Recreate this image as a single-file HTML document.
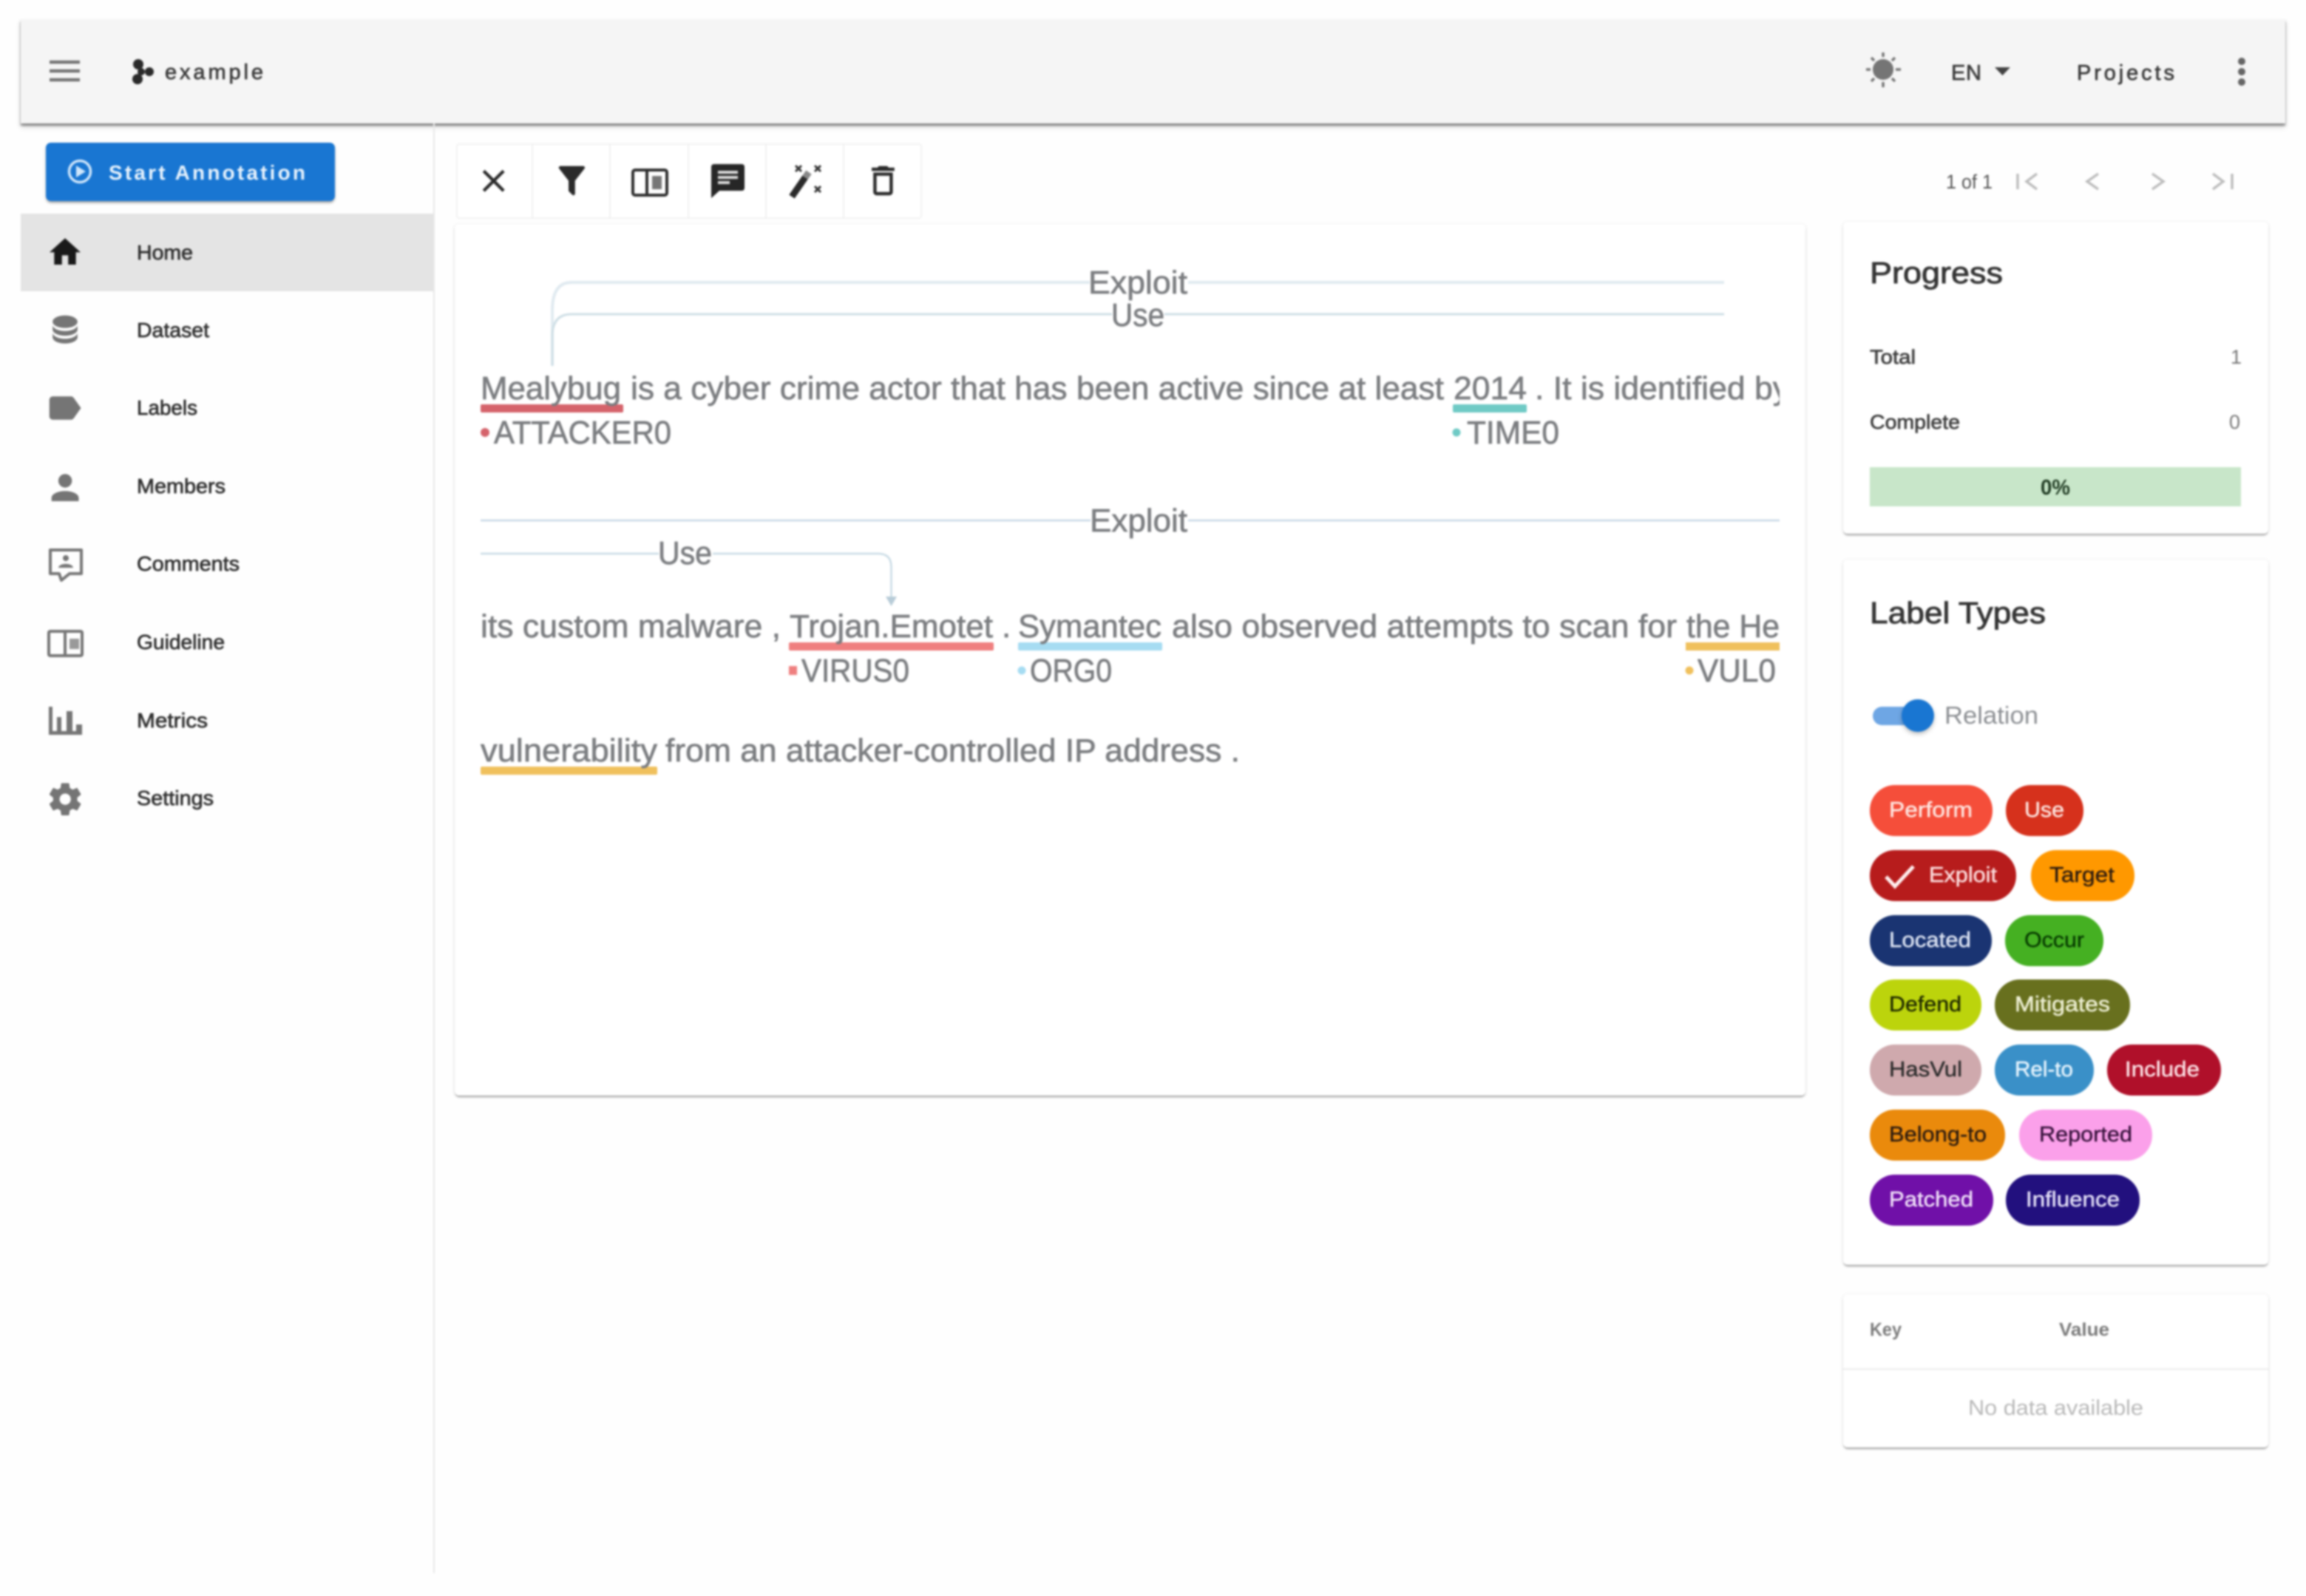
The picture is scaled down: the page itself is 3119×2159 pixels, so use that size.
<!DOCTYPE html>
<html lang="en"><head><meta charset="utf-8"><title>example</title>
<style>
html,body{margin:0;padding:0;background:#fff;width:3119px;height:2159px;overflow:hidden}
#w{position:relative;width:3119px;height:2159px;filter:blur(1.2px);background:#fefefe}
.a{position:absolute;box-sizing:border-box}
.card{background:#fff;border-radius:6px;box-shadow:0 3px 2px -1px rgba(0,0,0,.32),0 1px 5px rgba(0,0,0,.13)}
svg{position:absolute;left:0;top:0}
text{font-family:"Liberation Sans",Arial,sans-serif;white-space:pre}
.nav{font-size:28px;fill:#2e2e2e;stroke:#2e2e2e;stroke-width:.7px}
.top{font-size:29px;fill:#3a3a3a;stroke:#3a3a3a;stroke-width:.7px}
.tx{font-size:44px;fill:#7b7d80;stroke:#7b7d80;stroke-width:.7px}
.h{font-size:41px;fill:#333;stroke:#333;stroke-width:.9px}
.s{font-size:27px;fill:#3c3c3c;stroke:#3c3c3c;stroke-width:.7px}
.c{font-size:29px;fill:#fff;stroke:#fff;stroke-width:.4px}
.d{fill:#2a1a10;stroke:#2a1a10}
.k{font-size:25px;fill:#7a7a7a;font-weight:bold}
</style></head><body><div id="w">
<div class="a" style="left:28px;top:26px;width:3063px;height:141px;background:#f5f5f5;box-shadow:0 3px 3px rgba(0,0,0,.45),0 5px 8px rgba(0,0,0,.12)"></div>
<div class="a" style="left:586px;top:167px;width:2px;height:1961px;background:#e8e8e8"></div>
<div class="a" style="left:28px;top:289px;width:558px;height:105px;background:#e4e4e4"></div>
<div class="a" style="left:62px;top:193px;width:391px;height:79px;background:#1976d2;border-radius:7px;box-shadow:0 3px 3px -1px rgba(0,0,0,.3),0 2px 5px rgba(0,0,0,.14)"></div>
<div class="a" style="left:617px;top:194px;width:630px;height:102px;background:#fff;border:2px solid #f2f2f2;border-radius:4px"></div>
<div class="a card" style="left:615px;top:303px;width:1827px;height:1179px"></div>
<div class="a card" style="left:2493px;top:300px;width:575px;height:422px"></div>
<div class="a card" style="left:2493px;top:757px;width:575px;height:954px"></div>
<div class="a card" style="left:2493px;top:1751px;width:575px;height:207px"></div>
<div class="a" style="left:2529px;top:632px;width:502px;height:53px;background:#c8e6c9"></div>
<div class="a" style="left:2493px;top:1851px;width:575px;height:2px;background:#ececec"></div>

<svg width="3119" height="2159" viewBox="0 0 3119 2159" xmlns="http://www.w3.org/2000/svg">
<defs><clipPath id="cl"><rect x="640" y="480" width="1767" height="600"/></clipPath></defs>

<!-- app bar -->
<path d="M67 84H108M67 96H108M67 108H108" stroke="#757575" stroke-width="4.500" fill="none"/>
<g fill="#2a2a2a"><circle cx="187" cy="87" r="7"/><circle cx="191" cy="97" r="5"/><circle cx="186" cy="107" r="7"/><circle cx="202" cy="97" r="6"/></g>
<text class="top" x="223" y="107" textLength="133">example</text>
<g fill="#757575" stroke="#757575"><circle cx="2547" cy="94" r="14" stroke="none"/>
<path d="M2547 71V77M2547 111V118M2524 94H2530M2564 94H2571M2531 78L2535 82M2559 106L2563 110M2531 110L2535 106M2559 82L2563 78" stroke-width="3.500" fill="none"/></g>
<text class="top" x="2639" y="108" textLength="41">EN</text>
<path d="M2698 91H2719L2708.500 102Z" fill="#424242"/>
<text class="top" x="2809" y="108" textLength="132">Projects</text>
<g fill="#666"><circle cx="3032" cy="83" r="5"/><circle cx="3032" cy="97" r="5"/><circle cx="3032" cy="111" r="5"/></g>

<!-- start button -->
<circle cx="108" cy="232" r="14.500" fill="none" stroke="#cfe6fb" stroke-width="3.500"/>
<path d="M103 224L116 232L103 240Z" fill="#cfe6fb"/>
<text x="147" y="243" font-size="28" font-weight="bold" fill="#e8f3fd" textLength="266">Start Annotation</text>

<!-- nav icons -->
<path transform="translate(62.800 316) scale(2.100)" d="M10,20V14H14V20H19V12H22L12,3L2,12H5V20H10Z" fill="#1a1a1a"/>
<path transform="translate(62.800 420.500) scale(2.100)" d="M12,3C7.58,3 4,4.79 4,7C4,9.21 7.58,11 12,11C16.42,11 20,9.21 20,7C20,4.79 16.42,3 12,3M4,9V12C4,14.21 7.58,16 12,16C16.42,16 20,14.21 20,12V9C20,11.21 16.42,13 12,13C7.58,13 4,11.21 4,9M4,14V17C4,19.21 7.58,21 12,21C16.42,21 20,19.21 20,17V14C20,16.21 16.42,18 12,18C7.58,18 4,16.21 4,14Z" fill="#757575"/>
<path transform="translate(60 525) scale(2.250)" d="M17.63,5.84C17.27,5.33 16.67,5 16,5H5A2,2 0 0,0 3,7V17A2,2 0 0,0 5,19H16C16.67,19 17.27,18.66 17.63,18.15L22,12L17.63,5.84Z" fill="#757575"/>
<path transform="translate(60.500 632) scale(2.300)" d="M12,4A4,4 0 0,1 16,8A4,4 0 0,1 12,12A4,4 0 0,1 8,8A4,4 0 0,1 12,4M12,14C16.42,14 20,15.79 20,18V20H4V18C4,15.79 7.58,14 12,14Z" fill="#757575"/>
<path d="M68 744H110V776H94L83 785L80 776H68Z" fill="none" stroke="#757575" stroke-width="4" stroke-linejoin="round"/>
<circle cx="89" cy="755" r="4" fill="#757575"/><path d="M79 768C80 761 98 761 99 768Z" fill="#757575"/>
<rect x="66" y="854" width="45" height="33" rx="2" fill="none" stroke="#757575" stroke-width="4"/>
<path d="M88 854V887" stroke="#757575" stroke-width="4"/><rect x="94" y="864" width="13" height="14" fill="#999"/>
<path d="M66 956H71V989H111V994H66ZM77 970H83V989H77ZM90 962H98V989H90ZM103 980H111V989H103Z" fill="#757575"/>
<path transform="translate(62 1055) scale(2.180)" d="M12,15.5A3.5,3.5 0 0,1 8.5,12A3.5,3.5 0 0,1 12,8.5A3.5,3.5 0 0,1 15.5,12A3.5,3.5 0 0,1 12,15.5M19.43,12.97C19.47,12.65 19.5,12.33 19.5,12C19.5,11.67 19.47,11.34 19.43,11L21.54,9.37C21.73,9.22 21.78,8.95 21.66,8.73L19.66,5.27C19.54,5.05 19.27,4.96 19.05,5.05L16.56,6.05C16.04,5.66 15.5,5.32 14.87,5.07L14.5,2.42C14.46,2.18 14.25,2 14,2H10C9.75,2 9.54,2.18 9.5,2.42L9.13,5.07C8.5,5.32 7.96,5.66 7.44,6.05L4.95,5.05C4.73,4.96 4.46,5.05 4.34,5.27L2.34,8.73C2.21,8.95 2.27,9.22 2.46,9.37L4.57,11C4.53,11.34 4.5,11.67 4.5,12C4.5,12.33 4.53,12.65 4.57,12.97L2.46,14.63C2.27,14.78 2.21,15.05 2.34,15.27L4.34,18.73C4.46,18.95 4.73,19.03 4.95,18.95L7.44,17.94C7.96,18.34 8.5,18.68 9.13,18.93L9.5,21.58C9.54,21.82 9.75,22 10,22H14C14.25,22 14.46,21.82 14.5,21.58L14.87,18.93C15.5,18.67 16.04,18.34 16.56,17.94L19.05,18.95C19.27,19.03 19.54,18.95 19.66,18.73L21.66,15.27C21.78,15.05 21.73,14.78 21.54,14.63L19.43,12.97Z" fill="#757575"/>

<!-- nav text -->
<text class="nav" x="185" y="351" textLength="76" lengthAdjust="spacingAndGlyphs">Home</text>
<text class="nav" x="185" y="456" textLength="98" lengthAdjust="spacingAndGlyphs">Dataset</text>
<text class="nav" x="185" y="561" textLength="82" lengthAdjust="spacingAndGlyphs">Labels</text>
<text class="nav" x="185" y="667" textLength="120" lengthAdjust="spacingAndGlyphs">Members</text>
<text class="nav" x="185" y="772" textLength="139" lengthAdjust="spacingAndGlyphs">Comments</text>
<text class="nav" x="185" y="878" textLength="119" lengthAdjust="spacingAndGlyphs">Guideline</text>
<text class="nav" x="185" y="984" textLength="96" lengthAdjust="spacingAndGlyphs">Metrics</text>
<text class="nav" x="185" y="1089" textLength="104" lengthAdjust="spacingAndGlyphs">Settings</text>

<!-- toolbar -->
<path d="M720 195V295M825 195V295M931 195V295M1036 195V295M1141 195V295" stroke="#f0f0f0" stroke-width="2"/>
<path transform="translate(642 219) scale(2.140)" d="M19,6.41L17.59,5L12,10.59L6.41,5L5,6.41L10.59,12L5,17.59L6.41,19L12,13.41L17.59,19L19,17.59L13.41,12L19,6.41Z" fill="#2a2a2a"/>
<path transform="translate(747 218) scale(2.200)" d="M14,12V19.88C14.04,20.18 13.94,20.5 13.71,20.71C13.32,21.1 12.69,21.1 12.3,20.71L10.29,18.7C10.06,18.47 9.96,18.16 10,17.87V12H9.97L4.21,4.62C3.87,4.19 3.95,3.56 4.38,3.22C4.57,3.08 4.78,3 5,3H19C19.22,3 19.43,3.08 19.62,3.22C20.05,3.56 20.13,4.19 19.79,4.62L14.03,12H14Z" fill="#2a2a2a"/>
<rect x="856" y="230" width="46" height="34" rx="3" fill="none" stroke="#2f2f2f" stroke-width="4"/>
<path d="M875 230V264" stroke="#2f2f2f" stroke-width="4"/><rect x="882" y="238" width="13" height="18" fill="#777"/>
<path d="M966 222H1003Q1007 222 1007 226V254Q1007 258 1003 258H973L962 268V226Q962 222 966 222Z" fill="#262626"/>
<path d="M971 233H998M971 240H998M971 247H987" stroke="#ddd" stroke-width="4"/>
<path d="M1071 266L1089 240" stroke="#2a2a2a" stroke-width="9"/><path d="M1089 240L1094 233" stroke="#888" stroke-width="9"/>
<path d="M1076 224L1084 232M1084 224L1076 232M1102 224L1110 232M1110 224L1102 232M1102 252L1110 260M1110 252L1102 260" stroke="#333" stroke-width="3"/>
<path transform="translate(1168 218) scale(2.200)" d="M6,19A2,2 0 0,0 8,21H16A2,2 0 0,0 18,19V7H6V19M8,9H16V19H8V9M15.5,4L14.5,3H9.5L8.5,4H5V6H19V4H15.5Z" fill="#2a2a2a"/>

<!-- pager -->
<text x="2632" y="255" font-size="27" fill="#555" textLength="63" lengthAdjust="spacingAndGlyphs">1 of 1</text>
<path d="M2729 235V256M2755 235L2741 245.500L2755 256M2838 235L2823 245.500L2838 256M2911 235L2926 245.500L2911 256M2993 235L3007 245.500L2993 256M3019 235V256" fill="none" stroke="#bdbdbd" stroke-width="3.500"/>

<!-- relation lines -->
<g fill="none">
<path d="M747 495V420Q747 382 773 382H1474M1607 382H2332" stroke="#e0eaf0" stroke-width="4"/>
<path d="M747 495V455Q747 425 773 425H1504M1575 425H2332" stroke="#cfdfe6" stroke-width="3"/>
<path d="M650 704H1475M1607 704H2407" stroke="#c6d8e6" stroke-width="2.500"/>
<path d="M650 749H891M964 749H1188Q1205.500 749 1205.500 767V808" stroke="#c9dbe5" stroke-width="2.500"/>
</g>
<path d="M1198 807H1213L1205.500 820Z" fill="#b8ccd8"/>

<!-- relation text -->
<text class="tx" x="1472" y="397" textLength="134" lengthAdjust="spacingAndGlyphs">Exploit</text>
<text class="tx" x="1503" y="441" textLength="72" lengthAdjust="spacingAndGlyphs">Use</text>
<text class="tx" x="1474" y="719" textLength="132" lengthAdjust="spacingAndGlyphs">Exploit</text>
<text class="tx" x="890" y="763" textLength="73" lengthAdjust="spacingAndGlyphs">Use</text>

<!-- underlines -->
<rect x="650" y="547" width="193" height="11" rx="2" fill="#d5636b"/>
<rect x="1965" y="547" width="100" height="11" rx="2" fill="#6fcac5"/>
<rect x="1067" y="869" width="277" height="11" rx="2" fill="#ef7f7f"/>
<rect x="1377" y="869" width="195" height="11" rx="2" fill="#a6dcf2"/>
<rect x="2280" y="869" width="127" height="11" fill="#f0c05c"/>
<rect x="650" y="1037" width="239" height="11" rx="2" fill="#f0c05c"/>

<!-- document text -->
<g clip-path="url(#cl)">
<text class="tx" x="650" y="540" textLength="190" lengthAdjust="spacingAndGlyphs">Mealybug</text>
<text class="tx" x="853" y="540" textLength="1100" lengthAdjust="spacingAndGlyphs">is a cyber crime actor that has been active since at least</text>
<text class="tx" x="1966" y="540" textLength="99" lengthAdjust="spacingAndGlyphs">2014</text>
<text class="tx" x="2076" y="540" textLength="344" lengthAdjust="spacingAndGlyphs">. It is identified by</text>
<text class="tx" x="650" y="862" textLength="406" lengthAdjust="spacingAndGlyphs">its custom malware ,</text>
<text class="tx" x="1068" y="862" textLength="275" lengthAdjust="spacingAndGlyphs">Trojan.Emotet</text>
<text class="tx" x="1355" y="862">.</text>
<text class="tx" x="1377" y="862" textLength="194" lengthAdjust="spacingAndGlyphs">Symantec</text>
<text class="tx" x="1585" y="862" textLength="683" lengthAdjust="spacingAndGlyphs">also observed attempts to scan for</text>
<text class="tx" x="2281" y="862" textLength="126" lengthAdjust="spacingAndGlyphs">the He</text>
<text class="tx" x="650" y="1030" textLength="239" lengthAdjust="spacingAndGlyphs">vulnerability</text>
<text class="tx" x="900" y="1030" textLength="777" lengthAdjust="spacingAndGlyphs">from an attacker-controlled IP address .</text>
</g>

<!-- entity labels -->
<circle cx="656" cy="585" r="6" fill="#d5636b"/>
<text class="tx" x="668" y="600" textLength="240" lengthAdjust="spacingAndGlyphs">ATTACKER0</text>
<circle cx="1970" cy="585" r="5.500" fill="#6fcac5"/>
<text class="tx" x="1984" y="600" textLength="125" lengthAdjust="spacingAndGlyphs">TIME0</text>
<rect x="1067" y="901" width="11" height="12" fill="#ef7f7f"/>
<text class="tx" x="1084" y="922" textLength="146" lengthAdjust="spacingAndGlyphs">VIRUS0</text>
<circle cx="1382" cy="907" r="5.500" fill="#a6dcf2"/>
<text class="tx" x="1393" y="922" textLength="111" lengthAdjust="spacingAndGlyphs">ORG0</text>
<circle cx="2285" cy="907" r="5.500" fill="#f0c05c"/>
<text class="tx" x="2296" y="922" textLength="106" lengthAdjust="spacingAndGlyphs">VUL0</text>

<!-- progress -->
<text class="h" x="2529" y="383" textLength="180" lengthAdjust="spacingAndGlyphs">Progress</text>
<text class="s" x="2529" y="492" textLength="62" lengthAdjust="spacingAndGlyphs">Total</text>
<text x="3017" y="492" font-size="27" fill="#777">1</text>
<text class="s" x="2529" y="580" textLength="122" lengthAdjust="spacingAndGlyphs">Complete</text>
<text x="3015" y="580" font-size="27" fill="#777">0</text>
<text x="2760" y="669" font-size="29" font-weight="bold" fill="#1f3a22" textLength="40" lengthAdjust="spacingAndGlyphs">0%</text>

<!-- label types -->
<text class="h" x="2529" y="843" textLength="238" lengthAdjust="spacingAndGlyphs">Label Types</text>
<rect x="2533" y="956" width="67" height="25" rx="12.500" fill="#6ea6e4"/>
<circle cx="2594" cy="968" r="22" fill="#1976d2" style="filter:drop-shadow(0 3px 3px rgba(0,0,0,.25))"/>
<text x="2630" y="979" font-size="33" fill="#8b8e92" textLength="127" lengthAdjust="spacingAndGlyphs">Relation</text>

<!-- chips -->
<rect x="2529" y="1062" width="166" height="69" rx="34" fill="#f54e3a"/>
<text class="c" x="2555" y="1105" textLength="113" lengthAdjust="spacingAndGlyphs" style="fill:#ffe4dd">Perform</text>
<rect x="2713" y="1062" width="105" height="69" rx="34" fill="#d6311c"/>
<text class="c" x="2738" y="1105" textLength="54" lengthAdjust="spacingAndGlyphs" style="fill:#ffe4dd">Use</text>

<rect x="2529" y="1150" width="198" height="69" rx="34" fill="#b71c1c"/>
<path d="M2551 1186L2563 1199L2588 1172" fill="none" stroke="#ffeeee" stroke-width="5"/>
<text class="c" x="2609" y="1193" textLength="92" lengthAdjust="spacingAndGlyphs" style="fill:#ffd9d9">Exploit</text>
<rect x="2747" y="1150" width="140" height="69" rx="34" fill="#ff9800"/>
<text class="c d" x="2772" y="1193" textLength="88" lengthAdjust="spacingAndGlyphs">Target</text>

<rect x="2529" y="1238" width="165" height="69" rx="34" fill="#1a3472"/>
<text class="c" x="2555" y="1281" textLength="111" lengthAdjust="spacingAndGlyphs" style="fill:#d9e2f5">Located</text>
<rect x="2712" y="1238" width="133" height="69" rx="34" fill="#45b022"/>
<text class="c" x="2738" y="1281" textLength="81" lengthAdjust="spacingAndGlyphs" style="fill:#063a00;stroke:#063a00">Occur</text>

<rect x="2529" y="1325" width="151" height="69" rx="34" fill="#bcd40c"/>
<text class="c" x="2555" y="1368" textLength="98" lengthAdjust="spacingAndGlyphs" style="fill:#1c2600;stroke:#1c2600">Defend</text>
<rect x="2698" y="1325" width="183" height="69" rx="34" fill="#68701e"/>
<text class="c" x="2725" y="1368" textLength="129" lengthAdjust="spacingAndGlyphs" style="fill:#eef0cc">Mitigates</text>

<rect x="2529" y="1413" width="151" height="69" rx="34" fill="#cfa9ad"/>
<text class="c" x="2555" y="1456" textLength="99" lengthAdjust="spacingAndGlyphs" style="fill:#2a2a2a;stroke:#2a2a2a">HasVul</text>
<rect x="2698" y="1413" width="134" height="69" rx="34" fill="#3a90c8"/>
<text class="c" x="2725" y="1456" textLength="79" lengthAdjust="spacingAndGlyphs" style="fill:#e4f4ff">Rel-to</text>
<rect x="2850" y="1413" width="154" height="69" rx="34" fill="#b0102a"/>
<text class="c" x="2874" y="1456" textLength="101" lengthAdjust="spacingAndGlyphs" style="fill:#ffe0e4">Include</text>

<rect x="2529" y="1501" width="183" height="69" rx="34" fill="#ea8a0c"/>
<text class="c d" x="2555" y="1544" textLength="132" lengthAdjust="spacingAndGlyphs">Belong-to</text>
<rect x="2731" y="1501" width="180" height="69" rx="34" fill="#fba0ea"/>
<text class="c" x="2758" y="1544" textLength="126" lengthAdjust="spacingAndGlyphs" style="fill:#35103a;stroke:#35103a">Reported</text>

<rect x="2529" y="1589" width="167" height="69" rx="34" fill="#7010a8"/>
<text class="c" x="2555" y="1632" textLength="114" lengthAdjust="spacingAndGlyphs" style="fill:#efdcfa">Patched</text>
<rect x="2713" y="1589" width="181" height="69" rx="34" fill="#22107e"/>
<text class="c" x="2740" y="1632" textLength="127" lengthAdjust="spacingAndGlyphs" style="fill:#e2defa">Influence</text>

<!-- table -->
<text class="k" x="2529" y="1807" textLength="43" lengthAdjust="spacingAndGlyphs">Key</text>
<text class="k" x="2785" y="1807" textLength="68" lengthAdjust="spacingAndGlyphs">Value</text>
<text x="2662" y="1914" font-size="29" fill="#b8b8b8" textLength="237" lengthAdjust="spacingAndGlyphs">No data available</text>
</svg>
</div></body></html>
